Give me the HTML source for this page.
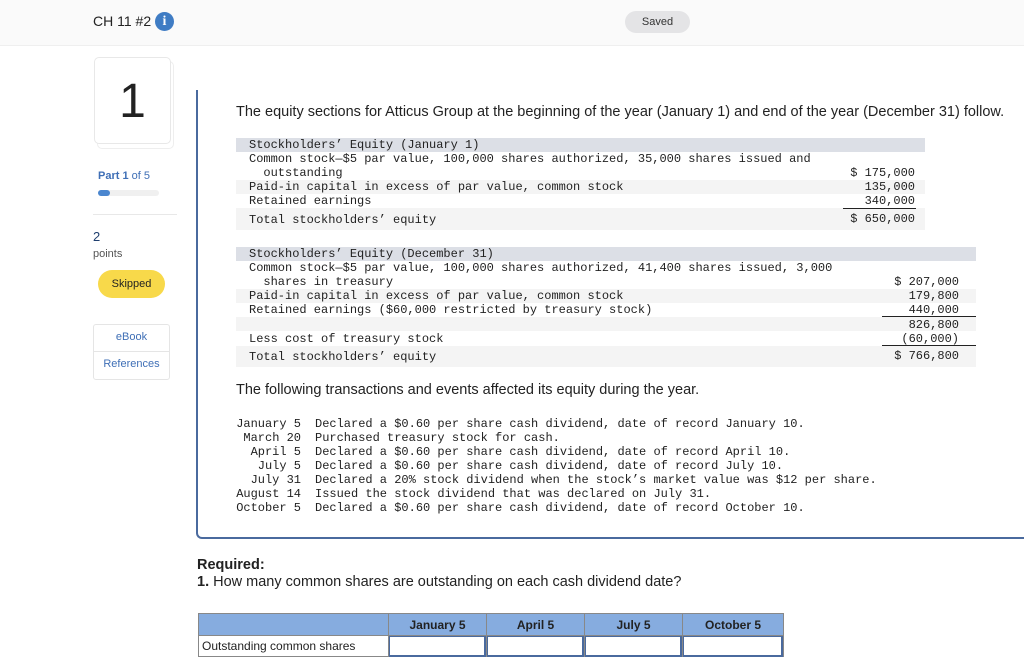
<!DOCTYPE html>
<html><head><meta charset="utf-8"><style>
*{margin:0;padding:0;box-sizing:border-box}
body{width:1024px;height:670px;background:#fff;position:relative;overflow:hidden;font-family:"Liberation Sans",sans-serif;color:#222}
.a{position:absolute}
.m{font-family:"Liberation Mono",monospace;font-size:12px;line-height:14px;color:#222;white-space:pre}
.row{position:absolute;height:14px}
.g{background:#f4f4f4}
.h{background:#dcdfe6}
.r{position:absolute;text-align:right;white-space:pre}
.p{font-size:14.5px;white-space:nowrap}
</style></head><body>
<div class="a" style="left:0;top:0;width:1024px;height:46px;background:#fafafa;border-bottom:1px solid #efefef"></div>
<div class="a" style="left:93px;top:13px;font-size:14px;color:#222">CH 11 #2</div>
<div class="a" style="left:155px;top:12px;width:19px;height:19px;border-radius:50%;background:#3f7cc4;color:#fff;font-weight:bold;font-size:14px;text-align:center;line-height:19px;font-family:'Liberation Serif',serif">i</div>
<div class="a" style="left:625px;top:11px;width:65px;height:22px;border-radius:11px;background:#e4e4e6;font-size:11px;text-align:center;line-height:22px;color:#333">Saved</div>

<div class="a" style="left:97px;top:61px;width:77px;height:88px;border:1px solid #eee;border-radius:5px;background:#fff"></div>
<div class="a" style="left:94px;top:57px;width:77px;height:87px;border:1px solid #e8e8e8;border-radius:5px;background:#fff;text-align:center;font-size:48px;line-height:87px;color:#222">1</div>

<div class="a" style="left:98px;top:170px;font-size:11px;color:#3f6fb6"><b>Part 1</b> of 5</div>
<div class="a" style="left:98px;top:190px;width:61px;height:6px;border-radius:3px;background:#f0f0f0"></div>
<div class="a" style="left:98px;top:190px;width:12px;height:6px;border-radius:3px;background:#4a86cf"></div>
<div class="a" style="left:93px;top:214px;width:84px;height:1px;background:#e8e8e8"></div>
<div class="a" style="left:93px;top:229px;font-size:13px;color:#1e3e6e">2</div>
<div class="a" style="left:93px;top:248px;font-size:11px;color:#555">points</div>
<div class="a" style="left:98px;top:270px;width:67px;height:28px;border-radius:14px;background:#f8d94a;font-size:11px;text-align:center;line-height:28px;color:#222">Skipped</div>
<div class="a" style="left:93px;top:324px;width:77px;height:56px;border:1px solid #e5e5e5;border-radius:3px"></div>
<div class="a" style="left:93px;top:351px;width:77px;height:1px;background:#e5e5e5"></div>
<div class="a" style="left:93px;top:331px;width:77px;text-align:center;font-size:11px;color:#3f6fb6">eBook</div>
<div class="a" style="left:93px;top:358px;width:77px;text-align:center;font-size:11px;color:#3f6fb6">References</div>

<div class="a" style="left:196px;top:90px;width:840px;height:449px;border-left:2px solid #4a6a9e;border-bottom:2px solid #4a6a9e;border-bottom-left-radius:6px"></div>

<div class="a p" style="left:236px;top:104px">The equity sections for Atticus Group at the beginning of the year (January 1) and end of the year (December 31) follow.</div>

<!-- table 1 -->
<div class="row h" style="left:236px;top:138px;width:689px"></div>
<div class="row g" style="left:236px;top:180px;width:689px"></div>
<div class="row g" style="left:236px;top:208px;width:689px;height:22px"></div>
<div class="a m" style="left:249px;top:138px">Stockholders’ Equity (January 1)
Common stock—$5 par value, 100,000 shares authorized, 35,000 shares issued and
  outstanding
Paid-in capital in excess of par value, common stock
Retained earnings</div>
<div class="a m" style="left:249px;top:213px">Total stockholders’ equity</div>
<div class="r m" style="left:840px;top:166px;width:75px">$ 175,000
135,000
340,000</div>
<div class="a" style="left:843px;top:208px;width:73px;height:1px;background:#222"></div>
<div class="r m" style="left:840px;top:212px;width:75px">$ 650,000</div>

<!-- table 2 -->
<div class="row h" style="left:236px;top:247px;width:740px"></div>
<div class="row g" style="left:236px;top:289px;width:740px"></div>
<div class="row g" style="left:236px;top:317px;width:740px"></div>
<div class="row g" style="left:236px;top:346px;width:740px;height:21px"></div>
<div class="a m" style="left:249px;top:247px">Stockholders’ Equity (December 31)
Common stock—$5 par value, 100,000 shares authorized, 41,400 shares issued, 3,000
  shares in treasury
Paid-in capital in excess of par value, common stock
Retained earnings ($60,000 restricted by treasury stock)</div>
<div class="a m" style="left:249px;top:332px">Less cost of treasury stock</div>
<div class="a m" style="left:249px;top:350px">Total stockholders’ equity</div>
<div class="r m" style="left:880px;top:275px;width:79px">$ 207,000
179,800
440,000</div>
<div class="a" style="left:882px;top:316px;width:94px;height:1px;background:#222"></div>
<div class="r m" style="left:880px;top:318px;width:79px">826,800
(60,000)</div>
<div class="a" style="left:882px;top:345px;width:94px;height:1px;background:#222"></div>
<div class="r m" style="left:880px;top:349px;width:79px">$ 766,800</div>

<div class="a p" style="left:236px;top:382px">The following transactions and events affected its equity during the year.</div>

<div class="r m" style="left:226px;top:417px;width:75px">January 5
March 20
April 5
July 5
July 31
August 14
October 5</div>
<div class="a m" style="left:315px;top:417px">Declared a $0.60 per share cash dividend, date of record January 10.
Purchased treasury stock for cash.
Declared a $0.60 per share cash dividend, date of record April 10.
Declared a $0.60 per share cash dividend, date of record July 10.
Declared a 20% stock dividend when the stock’s market value was $12 per share.
Issued the stock dividend that was declared on July 31.
Declared a $0.60 per share cash dividend, date of record October 10.</div>

<div class="a p" style="left:197px;top:557px;font-weight:bold">Required:</div>
<div class="a p" style="left:197px;top:574px"><b>1.</b> How many common shares are outstanding on each cash dividend date?</div>

<!-- answer table -->
<div class="a" style="left:198px;top:613px;width:586px;height:44px;border:1px solid #888;background:#fff"></div>
<div class="a" style="left:199px;top:614px;width:584px;height:21px;background:#86acdf"></div>
<div class="a" style="left:199px;top:635px;width:584px;height:1px;background:#888"></div>
<div class="a" style="left:388px;top:614px;width:1px;height:43px;background:#888"></div>
<div class="a" style="left:486px;top:614px;width:1px;height:43px;background:#888"></div>
<div class="a" style="left:584px;top:614px;width:1px;height:43px;background:#888"></div>
<div class="a" style="left:682px;top:614px;width:1px;height:43px;background:#888"></div>
<div class="a" style="left:389px;top:618px;width:97px;text-align:center;font-size:12px;font-weight:bold">January 5</div>
<div class="a" style="left:487px;top:618px;width:97px;text-align:center;font-size:12px;font-weight:bold">April 5</div>
<div class="a" style="left:585px;top:618px;width:97px;text-align:center;font-size:12px;font-weight:bold">July 5</div>
<div class="a" style="left:683px;top:618px;width:100px;text-align:center;font-size:12px;font-weight:bold">October 5</div>
<div class="a" style="left:202px;top:639px;font-size:12px">Outstanding common shares</div>
<div class="a" style="left:389px;top:636px;width:97px;height:21px;border:1px solid #4a6a9e;border-width:1px 2px 2px 1px"></div>
<div class="a" style="left:487px;top:636px;width:97px;height:21px;border:1px solid #4a6a9e;border-width:1px 2px 2px 1px"></div>
<div class="a" style="left:585px;top:636px;width:97px;height:21px;border:1px solid #4a6a9e;border-width:1px 2px 2px 1px"></div>
<div class="a" style="left:683px;top:636px;width:100px;height:21px;border:1px solid #4a6a9e;border-width:1px 2px 2px 1px"></div>
</body></html>
